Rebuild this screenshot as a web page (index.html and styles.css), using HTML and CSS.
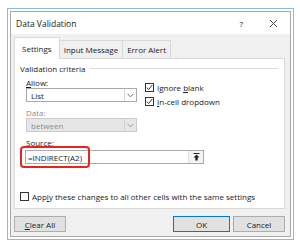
FILE: index.html
```html
<!DOCTYPE html>
<html>
<head>
<meta charset="utf-8">
<link rel="stylesheet" href="styles.css">
</head>
<body>
<div class="window">
  <div class="dialog">
    <div class="titlebar">
      <span class="title">Data Validation</span>
      <span class="help">?</span>
      <svg class="close" width="9" height="9" viewBox="0 0 9 9"><path d="M1 1L8 8M8 1L1 8" stroke="#444" stroke-width="1"/></svg>
    </div>
    <div class="body">
      <div class="tabs">
        <div class="tab active">Settings</div>
        <div class="tab">Input Message</div>
        <div class="tab">Error Alert</div>
      </div>
      <div class="panel">
        <div class="group-title"><span>Validation criteria</span><div class="rule"></div></div>
        <div class="criteria">
          <div class="left">
            <div class="label"><u>A</u>llow:</div>
            <div class="select">
              <span class="val">List</span>
              <span class="arrow"><svg width="7" height="5" viewBox="0 0 7 5"><path d="M0.5 0.8L3.5 3.8L6.5 0.8" fill="none" stroke="#666" stroke-width="1"/></svg></span>
            </div>
            <div class="label dim">Data:</div>
            <div class="select disabled">
              <span class="val">between</span>
              <span class="arrow"><svg width="7" height="5" viewBox="0 0 7 5"><path d="M0.5 0.8L3.5 3.8L6.5 0.8" fill="none" stroke="#999" stroke-width="1"/></svg></span>
            </div>
          </div>
          <div class="right">
            <div class="check"><span class="box checked"><svg width="7" height="7" viewBox="0 0 7 7"><path d="M0.8 3.6L2.6 5.5L6.3 1" fill="none" stroke="#333" stroke-width="1"/></svg></span><span>Ignore <u>b</u>lank</span></div>
            <div class="check"><span class="box checked"><svg width="7" height="7" viewBox="0 0 7 7"><path d="M0.8 3.6L2.6 5.5L6.3 1" fill="none" stroke="#333" stroke-width="1"/></svg></span><span><u>I</u>n-cell dropdown</span></div>
          </div>
        </div>
        <div class="label src"><u>S</u>ource:</div>
        <div class="source-wrap">
          <div class="source">
            <span class="formula">=INDIRECT(A2)</span>
            <span class="upbtn"><svg width="7" height="8" viewBox="0 0 7 8"><path d="M0.5 0.5H6.5" stroke="#222" stroke-width="1"/><path d="M3.5 1.5L0.5 4.5H2.3V7.5H4.7V4.5H6.5Z" fill="#222"/></svg></span>
          </div>
          <div class="highlight"></div>
        </div>
        <div class="spacer"></div>
        <div class="check apply"><span class="box"></span><span>App<u>l</u>y these changes to all other cells with the same settings</span></div>
      </div>
      <div class="buttons">
        <div class="btn"><u>C</u>lear All</div>
        <div class="grow"></div>
        <div class="btn default">OK</div>
        <div class="btn">Cancel</div>
      </div>
    </div>
  </div>
</div>
</body>
</html>
```
FILE: styles.css
```css
html, body {
  margin: 0;
  padding: 0;
  background: #ffffff;
}
body {
  font-family: "Open Sans", "Noto Sans", sans-serif;
  font-size: 8px;
  color: #1a1a1a;
}
u { text-decoration: underline; text-underline-offset: 1px; }
.window {
  margin: 8px 0 0 7px;
  width: 287px;
  height: 232px;
  box-sizing: border-box;
  border: 1px solid #8cb8e6;
  padding: 2px;
  background: #fff;
}
.dialog {
  box-sizing: border-box;
  height: 100%;
  border: 1px solid #a9a9a9;
  background: #f0f0f0;
  display: flex;
  flex-direction: column;
}
.titlebar {
  height: 22px;
  background: #fff;
  display: flex;
  align-items: center;
  padding: 0 12px 0 5px;
  font-size: 8.5px;
}
.title { flex: 1; }
.help { margin-right: 26px; font-size: 8px; }
.close { display: block; }
.body {
  flex: 1;
  display: flex;
  flex-direction: column;
  padding: 3px 5px 0 3px;
}
.tabs {
  display: flex;
  align-items: flex-end;
  height: 21px;
  position: relative;
  z-index: 1;
}
.tab {
  height: 18px;
  box-sizing: border-box;
  border: 1px solid #d9d9d9;
  border-bottom: none;
  padding: 0 4px;
  display: flex;
  align-items: center;
  background: #f0f0f0;
  margin-left: -1px;
}
.tab:first-child { margin-left: 0; }
.tab.active {
  height: 22px;
  background: #fff;
  margin-bottom: -1px;
  padding: 0 7px;
}
.panel {
  height: 151px;
  box-sizing: border-box;
  background: #fff;
  border: 1px solid #d9d9d9;
  display: flex;
  flex-direction: column;
  padding: 3px 6px 6px 5px;
}
.group-title {
  display: flex;
  align-items: center;
  height: 12px;
}
.rule {
  flex: 1;
  height: 1px;
  background: #dcdcdc;
  margin-left: 5px;
}
.criteria {
  display: flex;
  padding-left: 6px;
}
.left { width: 111px; }
.label { height: 11px; line-height: 11px; margin-top: 3px; }
.label.dim { color: #8c8c8c; margin-top: 5px; }
.select {
  height: 14px;
  box-sizing: border-box;
  border: 1px solid #a9a9a9;
  display: flex;
  align-items: center;
  background: #fff;
}
.select .val { flex: 1; padding-left: 4px; }
.select .arrow {
  width: 11px;
  height: 100%;
  display: flex;
  align-items: center;
  justify-content: center;
  border-left: 1px solid #d6d6d6;
}
.select.disabled {
  background: #e6e6e6;
  border-color: #cccccc;
  color: #8c8c8c;
}
.select.disabled .arrow { border-left-color: #cfcfcf; }
.right {
  padding-left: 8px;
  padding-top: 8px;
}
.check {
  display: flex;
  align-items: center;
  height: 11px;
  margin-bottom: 3px;
}
.box {
  width: 9px;
  height: 9px;
  box-sizing: border-box;
  border: 1px solid #333;
  background: #fff;
  margin-right: 3px;
  display: flex;
  align-items: center;
  justify-content: center;
}
.box svg { display: block; }
.label.src { padding-left: 6px; margin-top: 5px; }
.source-wrap {
  position: relative;
  margin-top: 2px;
  padding-left: 5px;
}
.source {
  width: 179px;
  height: 14px;
  box-sizing: border-box;
  border: 1px solid #a9a9a9;
  display: flex;
  align-items: center;
  background: #fff;
}
.formula { flex: 1; padding-left: 2px; }
.upbtn {
  width: 15px;
  height: 12px;
  box-sizing: border-box;
  border-left: 1px solid #e0e0e0;
  display: flex;
  align-items: center;
  justify-content: center;
  background: #f4f4f4;
}
.upbtn svg { display: block; }
.highlight {
  position: absolute;
  left: 0;
  top: -4px;
  width: 70px;
  height: 22px;
  box-sizing: border-box;
  border: 2px solid #e8241f;
  border-radius: 4px;
}
.spacer { flex: 1; }
.apply { margin-bottom: 0; }
.buttons {
  display: flex;
  align-items: center;
  padding-top: 7px;
}
.grow { flex: 1; }
.btn {
  width: 52px;
  height: 16px;
  box-sizing: border-box;
  border: 1px solid #adadad;
  background: #e1e1e1;
  display: flex;
  align-items: center;
  justify-content: center;
  margin-left: 3px;
}
.btn:first-child { margin-left: 0; }
.btn.default {
  width: 57px;
  border-color: #0078d7;
}
```
